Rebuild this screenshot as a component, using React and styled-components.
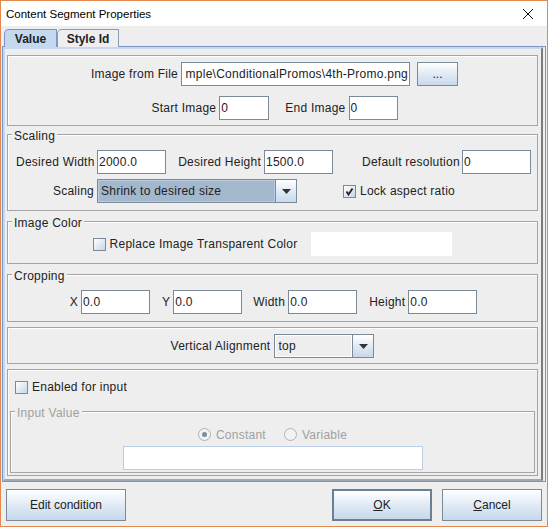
import styled, { createGlobalStyle } from "styled-components";

const GlobalStyle = createGlobalStyle`
  html, body { margin: 0; padding: 0; }
  body {
    font-family: "Liberation Sans", Arial, sans-serif;
    font-size: 12px;
    letter-spacing: 0.25px;
    color: #222;
  }
  * { box-sizing: border-box; }
`;

const Window = styled.div`
  width: 548px;
  height: 527px;
  border: 1px solid #e0884f;
  display: flex;
  flex-direction: column;
  background: #eeeeee;
`;

const TitleBar = styled.div`
  height: 25px;
  flex: none;
  background: #fff;
  display: flex;
  align-items: center;
  justify-content: space-between;
  padding: 0 13px 0 5px;
  color: #000;
  font-size: 11.5px;
  letter-spacing: 0;
`;

const Body = styled.div`
  flex: 1;
  display: flex;
  flex-direction: column;
  padding: 3px 1px 5px;
`;

const TabRow = styled.div`
  display: flex;
  height: 18px;
  padding-left: 2px;
  margin-bottom: -1px;
  flex: none;
`;

const Tab = styled.div`
  width: ${(p) => p.$w}px;
  height: 18px;
  border: 1px solid ${(p) => (p.$active ? "#7d95c4" : "#8c9cb4")};
  border-bottom: none;
  border-top-left-radius: 5px;
  background: ${(p) => (p.$active ? "#c4d8ee" : "#eeeeee")};
  font-weight: bold;
  letter-spacing: 0;
  display: flex;
  align-items: center;
  justify-content: center;
  position: relative;
  z-index: ${(p) => (p.$active ? 1 : 0)};
`;

const Panel = styled.div`
  border: 1px solid #7d95c4;
  padding-right: 2px;
  flex: none;
`;

const PanelInner = styled.div`
  border-style: solid;
  border-width: 2px;
  border-color: #c4d8ee #7c7c7c #9ea8b5 #c4d8ee;
  padding: 6px 3px 3px 2px;
  display: flex;
  flex-direction: column;
`;

const Box = styled.div`
  border: 1px solid #a4a4a4;
  box-shadow: inset 1px 1px 0 #fff;
  margin-top: ${(p) => p.$mt || 0}px;
  padding: ${(p) => p.$pad || "0"};
`;

const Group = styled.fieldset`
  margin: ${(p) => p.$mt || 0}px ${(p) => p.$mx || 0}px 0;
  padding: 0 0 ${(p) => p.$pb || 0}px;
  border: 1px solid #a4a4a4;
  box-shadow: inset 1px 1px 0 #fff;
  min-width: 0;
`;

const Legend = styled.legend`
  margin-left: 4px;
  padding: 4px 2px 0;
  line-height: 12px;
  background: #eeeeee;
  color: ${(p) => (p.$disabled ? "#a0a0a0" : "#222")};
`;

const Row = styled.div`
  display: flex;
  align-items: center;
  justify-content: ${(p) => (p.$left ? "flex-start" : "center")};
  height: ${(p) => p.$h || 24}px;
  padding-left: ${(p) => p.$pl || 0}px;
  margin-top: ${(p) => p.$mt || 0}px;
`;

const Pair = styled.div`
  display: flex;
  align-items: center;
  gap: ${(p) => p.$gap ?? 3}px;
  margin-left: ${(p) => p.$ml || 0}px;
  flex: none;
`;

const Label = styled.span`
  width: ${(p) => (p.$w ? `${p.$w}px` : "auto")};
  text-align: right;
  white-space: nowrap;
  flex: none;
  color: ${(p) => (p.$disabled ? "#a0a0a0" : "#222")};
`;

const Field = styled.div`
  width: ${(p) => p.$w}px;
  height: 24px;
  flex: none;
  border: 1px solid ${(p) => (p.$disabled ? "#b8cfe5" : "#7a8a99")};
  background: #fff;
  display: flex;
  align-items: center;
  justify-content: ${(p) => (p.$end ? "flex-end" : "flex-start")};
  padding: 0 1px;
  overflow: hidden;
  white-space: nowrap;
`;

const ColorBox = styled.div`
  width: 141px;
  height: 24px;
  background: #fff;
  margin-left: 14px;
  flex: none;
`;

const SmallButton = styled.button`
  width: 41px;
  height: 24px;
  margin-left: 7px;
  border: 1px solid #7a8a99;
  background: linear-gradient(#ffffff, #dde8f4 55%, #c8d9eb);
  font: inherit;
  color: #222;
  padding: 0;
  flex: none;
`;

const Combo = styled.div`
  width: ${(p) => p.$w}px;
  height: 24px;
  flex: none;
  border: 1px solid #7a8a99;
  display: flex;
`;

const ComboValue = styled.div`
  flex: 1;
  display: flex;
  align-items: center;
  padding-left: 3px;
  background: ${(p) => (p.$selected ? "#a3b8cc" : "#eeeeee")};
  box-shadow: inset 0 0 0 1px ${(p) => (p.$selected ? "#b9cbdd" : "#ffffff")};
  color: #222;
`;

const ComboArrow = styled.div`
  width: 21px;
  border-left: 1px solid #7a8a99;
  background: linear-gradient(#ffffff, #dde8f4 55%, #c8d9eb);
  display: flex;
  align-items: center;
  justify-content: center;
`;

const CheckItem = styled.label`
  display: flex;
  align-items: center;
  gap: 4px;
  margin-left: ${(p) => p.$ml || 0}px;
  white-space: nowrap;
  flex: none;
`;

const CheckBox = styled.span`
  width: 13px;
  height: 13px;
  border: 1px solid #7a8a99;
  background: linear-gradient(135deg, #ffffff, #c6d6e8);
  display: flex;
  align-items: center;
  justify-content: center;
  flex: none;
`;

const RadioItem = styled.label`
  display: flex;
  align-items: center;
  gap: 5px;
  margin-left: ${(p) => p.$ml || 0}px;
  color: #a0a0a0;
  flex: none;
`;

const Radio = styled.span`
  width: 13px;
  height: 13px;
  border-radius: 50%;
  border: 1px solid #aab4be;
  background: #f2f2f2;
  display: flex;
  align-items: center;
  justify-content: center;
  &::after {
    content: "";
    width: 5px;
    height: 5px;
    border-radius: 50%;
    background: ${(p) => (p.$on ? "#7f8d9a" : "transparent")};
  }
`;

const ButtonRow = styled.div`
  display: flex;
  justify-content: space-between;
  margin-top: 7px;
  padding: 0 4px;
  flex: none;
`;

const ButtonGroup = styled.div`
  display: flex;
  gap: 10px;
`;

const DialogButton = styled.button`
  width: ${(p) => p.$w}px;
  height: 32px;
  border: ${(p) => (p.$default ? "2px solid #6b7f93" : "1px solid #7a8a99")};
  background: linear-gradient(#ffffff, #dde8f4 55%, #c6d8ea);
  font: inherit;
  color: #222;
  padding: 0;
`;

const Arrow = () => (
  <svg width="9" height="5" viewBox="0 0 9 5">
    <path d="M0 0 H9 L4.5 5 Z" fill="#333" />
  </svg>
);

const Tick = () => (
  <svg width="9" height="9" viewBox="0 0 9 9">
    <path d="M1.5 4.5 L3.5 7.5 L7.5 1.5" fill="none" stroke="#222" strokeWidth="1.8" />
  </svg>
);

const Close = () => (
  <svg width="12" height="12" viewBox="0 0 12 12">
    <path d="M1 1 L11 11 M11 1 L1 11" stroke="#111" strokeWidth="1" />
  </svg>
);

const App = () => {
  return (
    <Window>
      <GlobalStyle />
      <TitleBar>
        <span>Content Segment Properties</span>
        <Close />
      </TitleBar>
      <Body>
        <TabRow>
          <Tab $w={53} $active>Value</Tab>
          <Tab $w={62}>Style Id</Tab>
        </TabRow>
        <Panel>
          <PanelInner>
            <Box $pad="6px 0 5px">
              <Row $pl={4}>
                <Pair>
                  <Label>Image from File</Label>
                  <Field $w={229} $end>
                    mple\ConditionalPromos\4th-Promo.png
                  </Field>
                </Pair>
                <SmallButton>...</SmallButton>
              </Row>
              <Row $pl={4} $mt={10}>
                <Pair>
                  <Label>Start Image</Label>
                  <Field $w={50}>0</Field>
                </Pair>
                <Pair $ml={16}>
                  <Label>End Image</Label>
                  <Field $w={49}>0</Field>
                </Pair>
              </Row>
            </Box>

            <Group $pb={7}>
              <Legend>Scaling</Legend>
              <Row $left $pl={8} $mt={8}>
                <Pair>
                  <Label $w={78}>Desired Width</Label>
                  <Field $w={69}>2000.0</Field>
                </Pair>
                <Pair $ml={11}>
                  <Label $w={84}>Desired Height</Label>
                  <Field $w={69}>1500.0</Field>
                </Pair>
                <Pair $ml={29}>
                  <Label $w={97}>Default resolution</Label>
                  <Field $w={69}>0</Field>
                </Pair>
              </Row>
              <Row $left $pl={8} $mt={5}>
                <Pair>
                  <Label $w={78}>Scaling</Label>
                  <Combo $w={200}>
                    <ComboValue $selected>Shrink to desired size</ComboValue>
                    <ComboArrow>
                      <Arrow />
                    </ComboArrow>
                  </Combo>
                </Pair>
                <CheckItem $ml={46}>
                  <CheckBox>
                    <Tick />
                  </CheckBox>
                  Lock aspect ratio
                </CheckItem>
              </Row>
            </Group>

            <Group $mt={2} $pb={7}>
              <Legend>Image Color</Legend>
              <Row $mt={3}>
                <CheckItem>
                  <CheckBox />
                  Replace Image Transparent Color
                </CheckItem>
                <ColorBox />
              </Row>
            </Group>

            <Group $mt={2} $pb={7}>
              <Legend>Cropping</Legend>
              <Row $mt={8} $pl={2}>
                <Pair>
                  <Label>X</Label>
                  <Field $w={69}>0.0</Field>
                </Pair>
                <Pair $ml={12}>
                  <Label>Y</Label>
                  <Field $w={69}>0.0</Field>
                </Pair>
                <Pair $ml={11}>
                  <Label>Width</Label>
                  <Field $w={69}>0.0</Field>
                </Pair>
                <Pair $ml={12}>
                  <Label>Height</Label>
                  <Field $w={69}>0.0</Field>
                </Pair>
              </Row>
            </Group>

            <Box $mt={5} $pad="6px 0 5px">
              <Row>
                <Pair $gap={4}>
                  <Label>Vertical Alignment</Label>
                  <Combo $w={100}>
                    <ComboValue>top</ComboValue>
                    <ComboArrow>
                      <Arrow />
                    </ComboArrow>
                  </Combo>
                </Pair>
              </Row>
            </Box>

            <Box $mt={5} $pad="9px 2px 2px">
              <Row $left $pl={5} $h={16}>
                <CheckItem>
                  <CheckBox />
                  Enabled for input
                </CheckItem>
              </Row>
              <Group $mt={8} $pb={2}>
                <Legend $disabled>Input Value</Legend>
                <Row $mt={8} $h={15}>
                  <RadioItem>
                    <Radio $on />
                    Constant
                  </RadioItem>
                  <RadioItem $ml={18}>
                    <Radio />
                    Variable
                  </RadioItem>
                </Row>
                <Row $mt={4}>
                  <Field $w={300} $disabled />
                </Row>
              </Group>
            </Box>
          </PanelInner>
        </Panel>
        <ButtonRow>
          <DialogButton $w={120}>Edit condition</DialogButton>
          <ButtonGroup>
            <DialogButton $w={100} $default>
              <u>O</u>K
            </DialogButton>
            <DialogButton $w={100}>
              <u>C</u>ancel
            </DialogButton>
          </ButtonGroup>
        </ButtonRow>
      </Body>
    </Window>
  );
};

export default App;
